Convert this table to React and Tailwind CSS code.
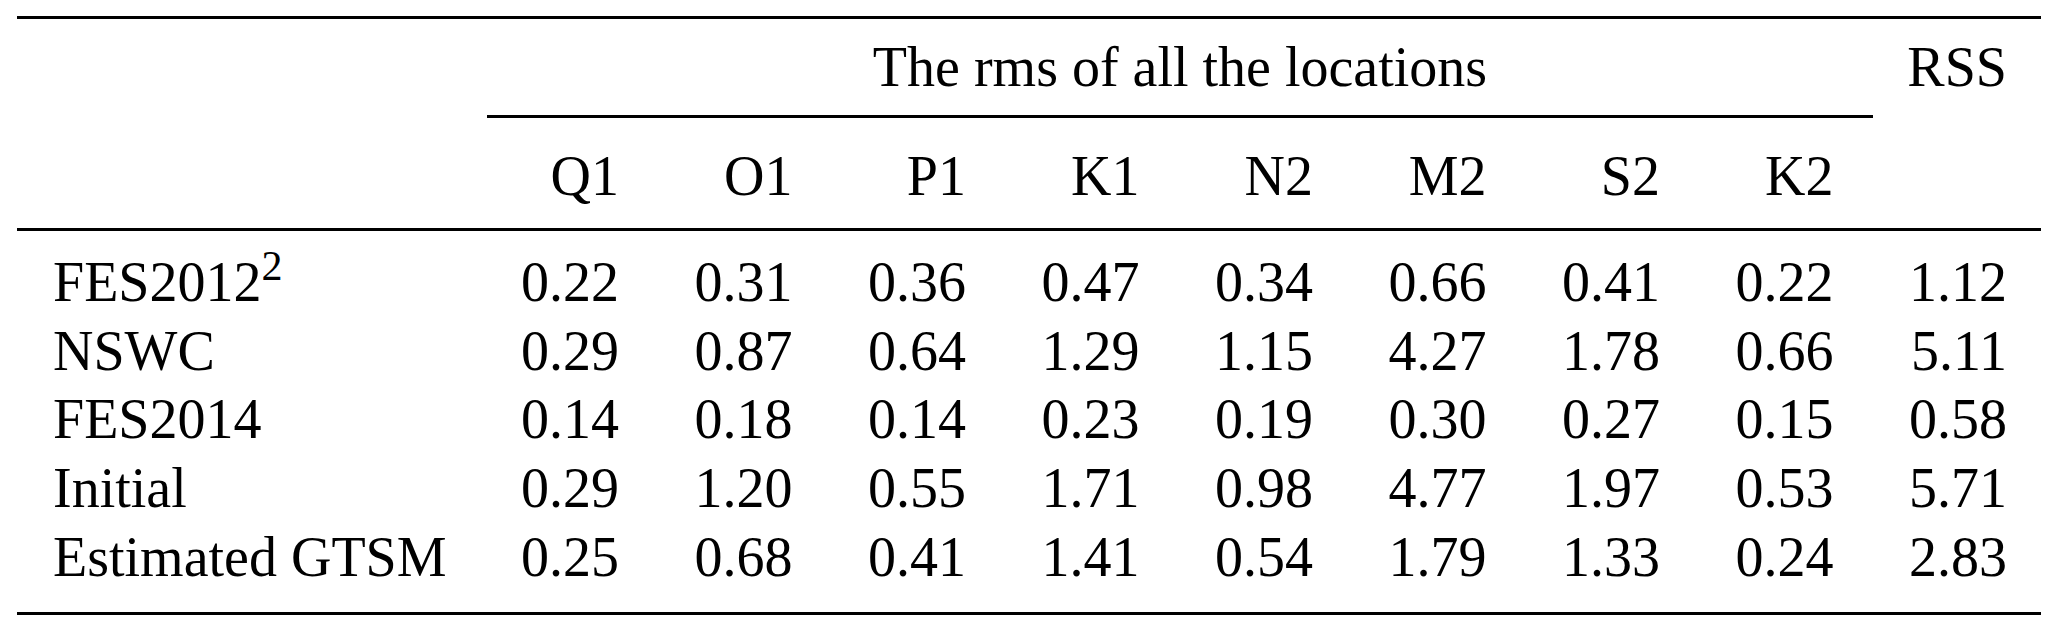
import React from 'react';

const tides = ['Q1', 'O1', 'P1', 'K1', 'N2', 'M2', 'S2', 'K2'];

const rows = [
  { name: 'FES2012', sup: '2', vals: ['0.22', '0.31', '0.36', '0.47', '0.34', '0.66', '0.41', '0.22', '1.12'] },
  { name: 'NSWC', vals: ['0.29', '0.87', '0.64', '1.29', '1.15', '4.27', '1.78', '0.66', '5.11'] },
  { name: 'FES2014', vals: ['0.14', '0.18', '0.14', '0.23', '0.19', '0.30', '0.27', '0.15', '0.58'] },
  { name: 'Initial', vals: ['0.29', '1.20', '0.55', '1.71', '0.98', '4.77', '1.97', '0.53', '5.71'] },
  { name: 'Estimated GTSM', vals: ['0.25', '0.68', '0.41', '1.41', '0.54', '1.79', '1.33', '0.24', '2.83'] },
];

export default function App() {
  return (
    <div className="w-[2067px] h-[634px] bg-white pl-[17px] pt-[16px] text-black font-['Liberation_Serif','Times_New_Roman',serif] text-[56px] leading-[56px]">
      <div className="grid grid-cols-[462.5px_repeat(9,173.5px)]">
        {/* toprule */}
        <div className="col-span-10 h-[3px] bg-black" />

        {/* header row 1 */}
        <div className="h-[96px]" />
        <div className="col-span-8 h-[96px] ml-[7.5px] mr-[-5.5px] flex items-center justify-center">
          The rms of all the locations
        </div>
        <div className="h-[96px] flex items-center justify-end pr-[34px]">RSS</div>

        {/* cmidrule */}
        <div />
        <div className="col-span-8 h-[3px] bg-black ml-[7.5px] mr-[-5.5px]" />
        <div />

        {/* header row 2 */}
        <div className="h-[110px]" />
        {tides.map((t) => (
          <div key={t} className="h-[110px] pt-[30px] text-right pr-[34px]">
            {t}
          </div>
        ))}
        <div className="h-[110px]" />

        {/* midrule */}
        <div className="col-span-10 h-[3px] bg-black" />
        <div className="col-span-10 h-[16.6px]" />

        {rows.map((r) => (
          <React.Fragment key={r.name}>
            <div className="h-[68.75px] flex items-center pl-[36px] whitespace-nowrap">
              <span>
                {r.name}
                {r.sup && <sup className="text-[42px]">{r.sup}</sup>}
              </span>
            </div>
            {r.vals.map((v, i) => (
              <div key={i} className="h-[68.75px] flex items-center justify-end pr-[34px]">
                {v}
              </div>
            ))}
          </React.Fragment>
        ))}

        {/* bottomrule */}
        <div className="col-span-10 h-[20.4px]" />
        <div className="col-span-10 h-[3px] bg-black" />
      </div>
    </div>
  );
}
